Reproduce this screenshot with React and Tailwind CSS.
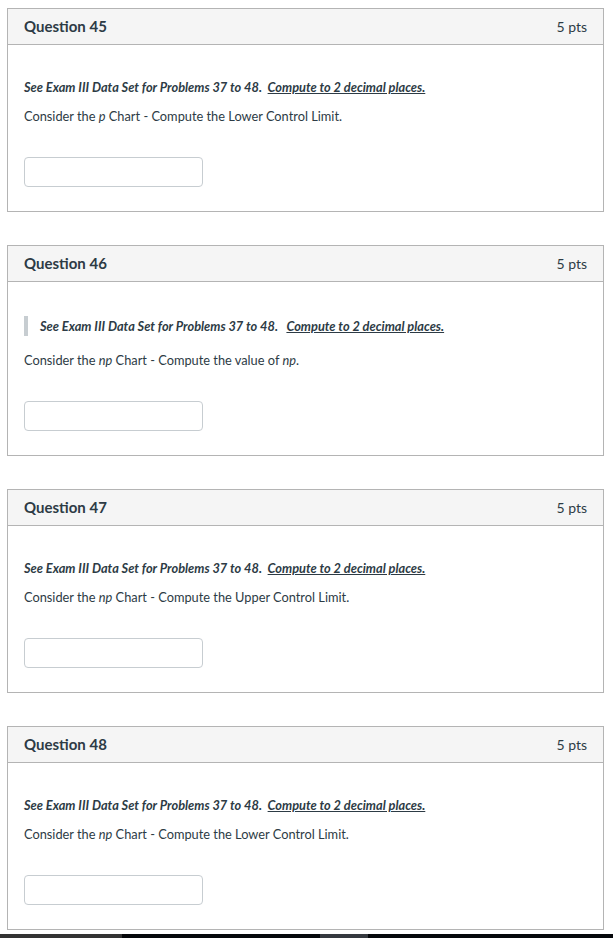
import React from "react";

const font = { fontFamily: "Lato, 'Noto Sans', sans-serif" };

function Card({ num, children }) {
  return (
    <div className="border border-[#b4b4b4] bg-white">
      <div className="flex h-[36px] items-center justify-between border-b border-[#b4b4b4] bg-[#f5f5f5] pl-[16px] pr-[16px]">
        <span className="text-[15px] font-bold text-[#2d3b45]">Question {num}</span>
        <span className="text-[14px] text-[#2d3b45]">5 pts</span>
      </div>
      <div className="px-[16px] pt-[32px] pb-[24px]">
        {children}
        <div className="mt-[32px] h-[30px] w-[179px] rounded-[4px] border border-[#c7cdd1] bg-white" />
      </div>
    </div>
  );
}

function Lead({ quote }) {
  const inner = (
    <span className="text-[12.8px] font-bold italic text-[#2d3b45]">
      See Exam III Data Set for Problems 37 to 48.{quote ? "\u00a0\u00a0\u00a0" : "\u00a0\u00a0"}
      <span className="underline">Compute to 2 decimal places.</span>
    </span>
  );
  if (quote) {
    return (
      <div className="mt-[2px] flex h-[20px] items-center border-l-[4px] border-[#c7cdd1] pl-[12px] leading-[18px]">
        {inner}
      </div>
    );
  }
  return <div className="leading-[18px]">{inner}</div>;
}

function Line({ children, mt }) {
  return (
    <div className={`text-[12.8px] leading-[18px] text-[#2d3b45] ${mt}`}>{children}</div>
  );
}

export default function App() {
  return (
    <div style={font} className="min-h-[938px] bg-white">
      <div className="flex flex-col gap-[33px] pl-[7px] pr-[9px] pt-[8px]">
        <Card num={45}>
          <Lead />
          <Line mt="mt-[11px]">
            Consider the <i>p</i> Chart - Compute the Lower Control Limit.
          </Line>
        </Card>
        <Card num={46}>
          <Lead quote />
          <Line mt="mt-[15px]">
            Consider the <i>np</i> Chart - Compute the value of <i>np</i>.
          </Line>
        </Card>
        <Card num={47}>
          <Lead />
          <Line mt="mt-[11px]">
            Consider the <i>np</i> Chart - Compute the Upper Control Limit.
          </Line>
        </Card>
        <Card num={48}>
          <Lead />
          <Line mt="mt-[11px]">
            Consider the <i>np</i> Chart - Compute the Lower Control Limit.
          </Line>
        </Card>
      </div>
      <div className="fixed bottom-0 left-0 flex h-[4px] w-full">
        <div className="w-[122px] bg-[#333333]" />
        <div className="w-[198px] bg-[#05070a]" />
        <div className="w-[48px] bg-[#35393f]" />
        <div className="flex-1 bg-[#05070a]" />
      </div>
    </div>
  );
}
